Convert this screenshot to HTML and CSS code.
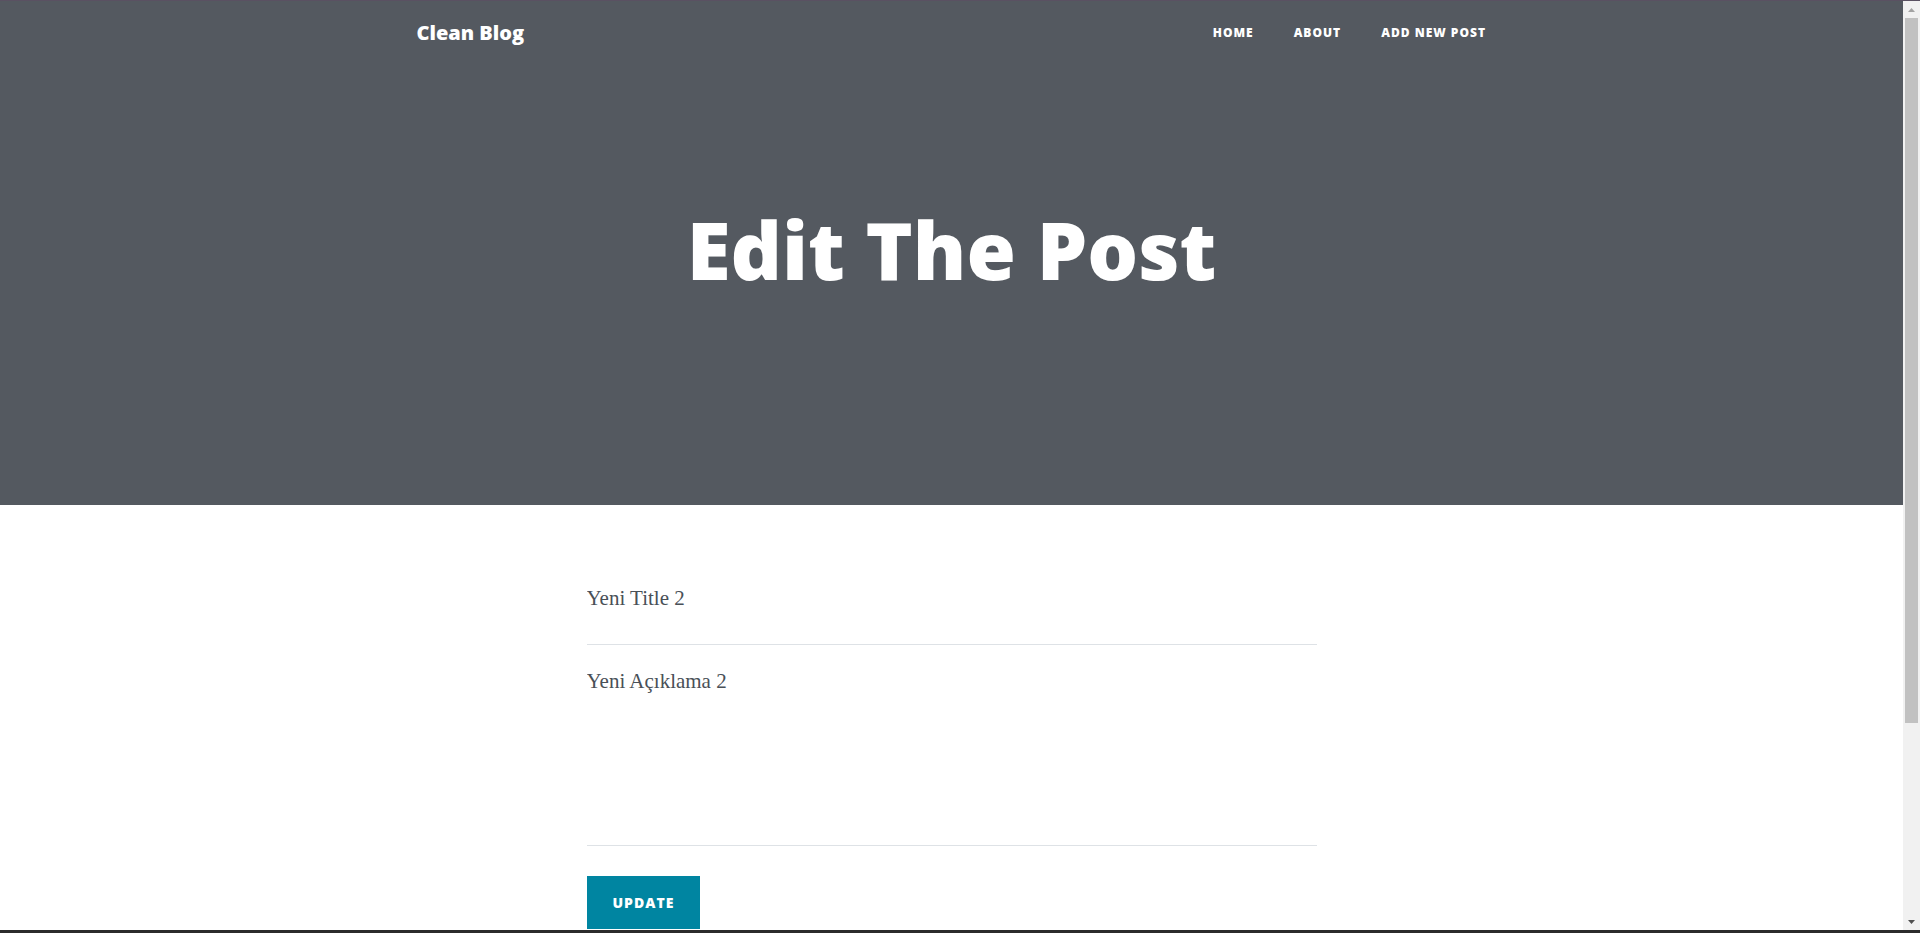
FILE: index.html
```html
<!DOCTYPE html>
<html lang="tr">
<head>
<meta charset="utf-8">
<title>Clean Blog - Edit The Post</title>
<link rel="stylesheet" href="styles.css">
</head>
<body>
<div class="page">
  <header class="masthead">
    <nav class="navbar">
      <div class="nav-inner">
        <a class="brand" href="#">Clean Blog</a>
        <ul class="nav-links">
          <li><a href="#">Home</a></li>
          <li><a href="#">About</a></li>
          <li><a href="#">Add New Post</a></li>
        </ul>
      </div>
    </nav>
    <div class="page-heading">
      <h1>Edit The Post</h1>
    </div>
  </header>

  <main class="content">
    <div class="column">
      <form class="edit-form">
        <div class="field field-title">
          <input class="field-input" type="text" name="title" value="Yeni Title 2" aria-label="Title">
        </div>
        <div class="field field-desc">
          <textarea class="field-area" name="detail" aria-label="Description">Yeni Açıklama 2</textarea>
        </div>
        <button class="btn" type="submit">Update</button>
      </form>
    </div>
  </main>
</div>

<div class="top-edge"></div>
<div class="scrollbar">
  <div class="sb-arrow sb-up">
    <svg width="7" height="4" viewBox="0 0 7 4"><polygon points="0,4 3.5,0 7,4" fill="#a3a3a3"/></svg>
  </div>
  <div class="sb-thumb"></div>
  <div class="sb-arrow sb-down">
    <svg width="7" height="4" viewBox="0 0 7 4"><polygon points="0,0 7,0 3.5,4" fill="#505050"/></svg>
  </div>
</div>
<div class="bottom-edge"></div>
</body>
</html>
```

FILE: styles.css
```css
html, body {
  margin: 0;
  padding: 0;
  overflow: hidden;
  background: #ffffff;
}

body {
  font-family: "Open Sans", "Liberation Sans", sans-serif;
  color: #212529;
}

.page {
  width: 1903px;
}

/* Header */
.masthead {
  background-color: #545960;
  height: 505px;
  box-sizing: border-box;
}

.navbar {
  height: 60px;
}

.nav-inner {
  width: 1140px;
  height: 60px;
  margin: 0 auto;
  padding: 0 15.5px 0 35px;
  box-sizing: border-box;
  display: flex;
  justify-content: space-between;
  align-items: flex-start;
}

.brand {
  margin-top: 19px;
  font-family: "Open Sans", sans-serif;
  font-weight: 800;
  font-size: 20px;
  line-height: 27px;
  color: #ffffff;
  text-decoration: none;
}

.nav-links {
  display: flex;
  list-style: none;
  margin: 24px 0 0;
  padding: 0;
}

.nav-links a {
  display: block;
  padding: 0 20px;
  font-family: "Open Sans", sans-serif;
  font-weight: 800;
  font-size: 12px;
  line-height: 18px;
  letter-spacing: 1px;
  text-transform: uppercase;
  color: #ffffff;
  text-decoration: none;
}

.nav-links li:last-child a {
  padding-right: 20px;
}

.page-heading h1 {
  margin: 141px 0 0;
  font-family: "Open Sans", sans-serif;
  font-weight: 800;
  font-size: 80px;
  line-height: 96px;
  text-align: center;
  color: #ffffff;
}

/* Content */
.content {
  width: 1140px;
  margin: 0 auto;
}

.column {
  width: 760px;
  margin: 0 auto;
  padding: 0 15px;
  box-sizing: border-box;
}

.field {
  border-bottom: 1px solid #dee2e6;
}

.field-title {
  padding: 78px 0 29.5px;
}

.field-desc {
  padding: 21px 0 9px;
}

.field-input,
.field-area {
  display: block;
  width: 100%;
  margin: 0;
  padding: 0;
  border: none;
  outline: none;
  background: transparent;
  font-family: "Liberation Serif", "Times New Roman", serif;
  font-size: 21px;
  line-height: 31.5px;
  color: #495057;
  box-sizing: border-box;
}

.field-input {
  height: 31.5px;
}

.field-area {
  height: 170px;
  resize: none;
  overflow: hidden;
}

.btn {
  display: block;
  margin: 30px 0 0;
  padding: 15px 25px;
  border: 1px solid #0085a1;
  border-radius: 0;
  background-color: #0085a1;
  color: #ffffff;
  font-family: "Open Sans", sans-serif;
  font-weight: 800;
  font-size: 14px;
  line-height: 21px;
  letter-spacing: 1px;
  text-transform: uppercase;
  cursor: pointer;
}

/* Window chrome overlays */
.top-edge {
  position: fixed;
  top: 0;
  left: 0;
  right: 0;
  height: 1px;
  background: #5a5162;
}

.bottom-edge {
  position: fixed;
  bottom: 0;
  left: 0;
  right: 0;
  height: 3px;
  background: #2b2b2b;
}

.scrollbar {
  position: fixed;
  top: 1px;
  right: 0;
  bottom: 3px;
  width: 17px;
  background: #f1f1f1;
  display: flex;
  flex-direction: column;
  align-items: center;
}

.sb-arrow {
  height: 17px;
  width: 17px;
  display: flex;
  align-items: center;
  justify-content: center;
  flex: none;
}

.sb-thumb {
  width: 13px;
  height: 705px;
  background: #c1c1c1;
  flex: none;
}

.sb-down {
  margin-top: auto;
}
```
